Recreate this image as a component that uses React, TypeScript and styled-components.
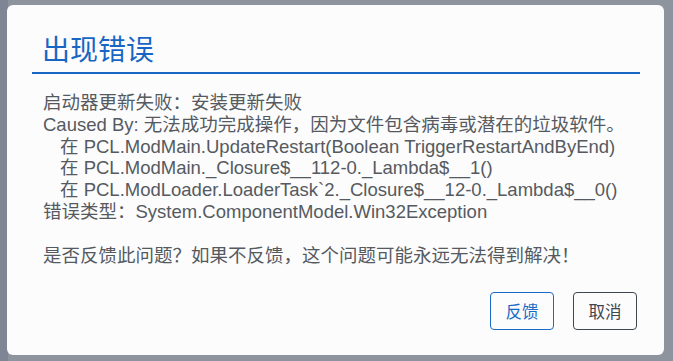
import React from 'react'
import styled, { createGlobalStyle } from 'styled-components'

const GlobalStyle = createGlobalStyle`
  html, body {
    margin: 0;
    padding: 0;
    width: 673px;
    height: 361px;
    overflow: hidden;
    background: #8c929c;
    font-family: 'Liberation Sans', 'Noto Sans CJK SC', sans-serif;
  }
`

const stack = [
  '在 PCL.ModMain.UpdateRestart(Boolean TriggerRestartAndByEnd)',
  '在 PCL.ModMain._Closure$__112-0._Lambda$__1()',
  '在 PCL.ModLoader.LoaderTask`2._Closure$__12-0._Lambda$__0()',
]

const App = (): JSX.Element => {
  return (
    <>
      <GlobalStyle />
      <Backdrop>
        <Dialog>
          <Title>出现错误</Title>
          <Divider />
          <Body>
            <Line>启动器更新失败：安装更新失败</Line>
            <Line>Caused By: 无法成功完成操作，因为文件包含病毒或潜在的垃圾软件。</Line>
            {stack.map((s) => (
              <Line key={s} indent>
                {s}
              </Line>
            ))}
            <Line>错误类型：System.ComponentModel.Win32Exception</Line>
            <Gap />
            <Line>是否反馈此问题？如果不反馈，这个问题可能永远无法得到解决！</Line>
          </Body>
          <Actions>
            <Button primary>反馈</Button>
            <Button>取消</Button>
          </Actions>
        </Dialog>
      </Backdrop>
    </>
  )
}

const Backdrop = styled.div`
  width: 673px;
  height: 361px;
  padding: 5px 9px 6px 7px;
  box-sizing: border-box;
  background: linear-gradient(to right, #7e8695 0, #7e8695 8px, #8e949e 8px);
`

const Dialog = styled.div`
  display: flex;
  flex-direction: column;
  width: 657px;
  height: 350px;
  box-sizing: border-box;
  padding: 0 24px 25px 25px;
  background: #fcfcfd;
  border-radius: 6px;
`

const Title = styled.div`
  padding: 25px 0 0 10px;
  height: 42px;
  font-family: 'Noto Sans CJK SC', sans-serif;
  font-size: 28px;
  line-height: 36px;
  color: #1766c4;
`

const Divider = styled.div`
  height: 2px;
  background: #1766c4;
`

const Body = styled.div`
  padding: 18px 0 0 11px;
  font-size: 18.5px;
  line-height: 21.8px;
  color: #555a60;
`

const Line = styled.div<{ indent?: boolean }>`
  white-space: pre;
  padding-left: ${(p) => (p.indent ? '17px' : '0')};
`

const Gap = styled.div`
  height: 21.8px;
`

const Actions = styled.div`
  margin-top: auto;
  display: flex;
  justify-content: flex-end;
  gap: 19px;
  padding-right: 3px;
`

const Button = styled.button<{ primary?: boolean }>`
  width: 64px;
  height: 38px;
  box-sizing: border-box;
  border-radius: 4px;
  background: transparent;
  border: 1px solid ${(p) => (p.primary ? '#1b6ac8' : '#3e4651')};
  color: ${(p) => (p.primary ? '#1b6ac8' : '#3e4651')};
  font-family: 'Noto Sans CJK SC', sans-serif;
  font-size: 16.5px;
  padding: 0;
`

export default App
